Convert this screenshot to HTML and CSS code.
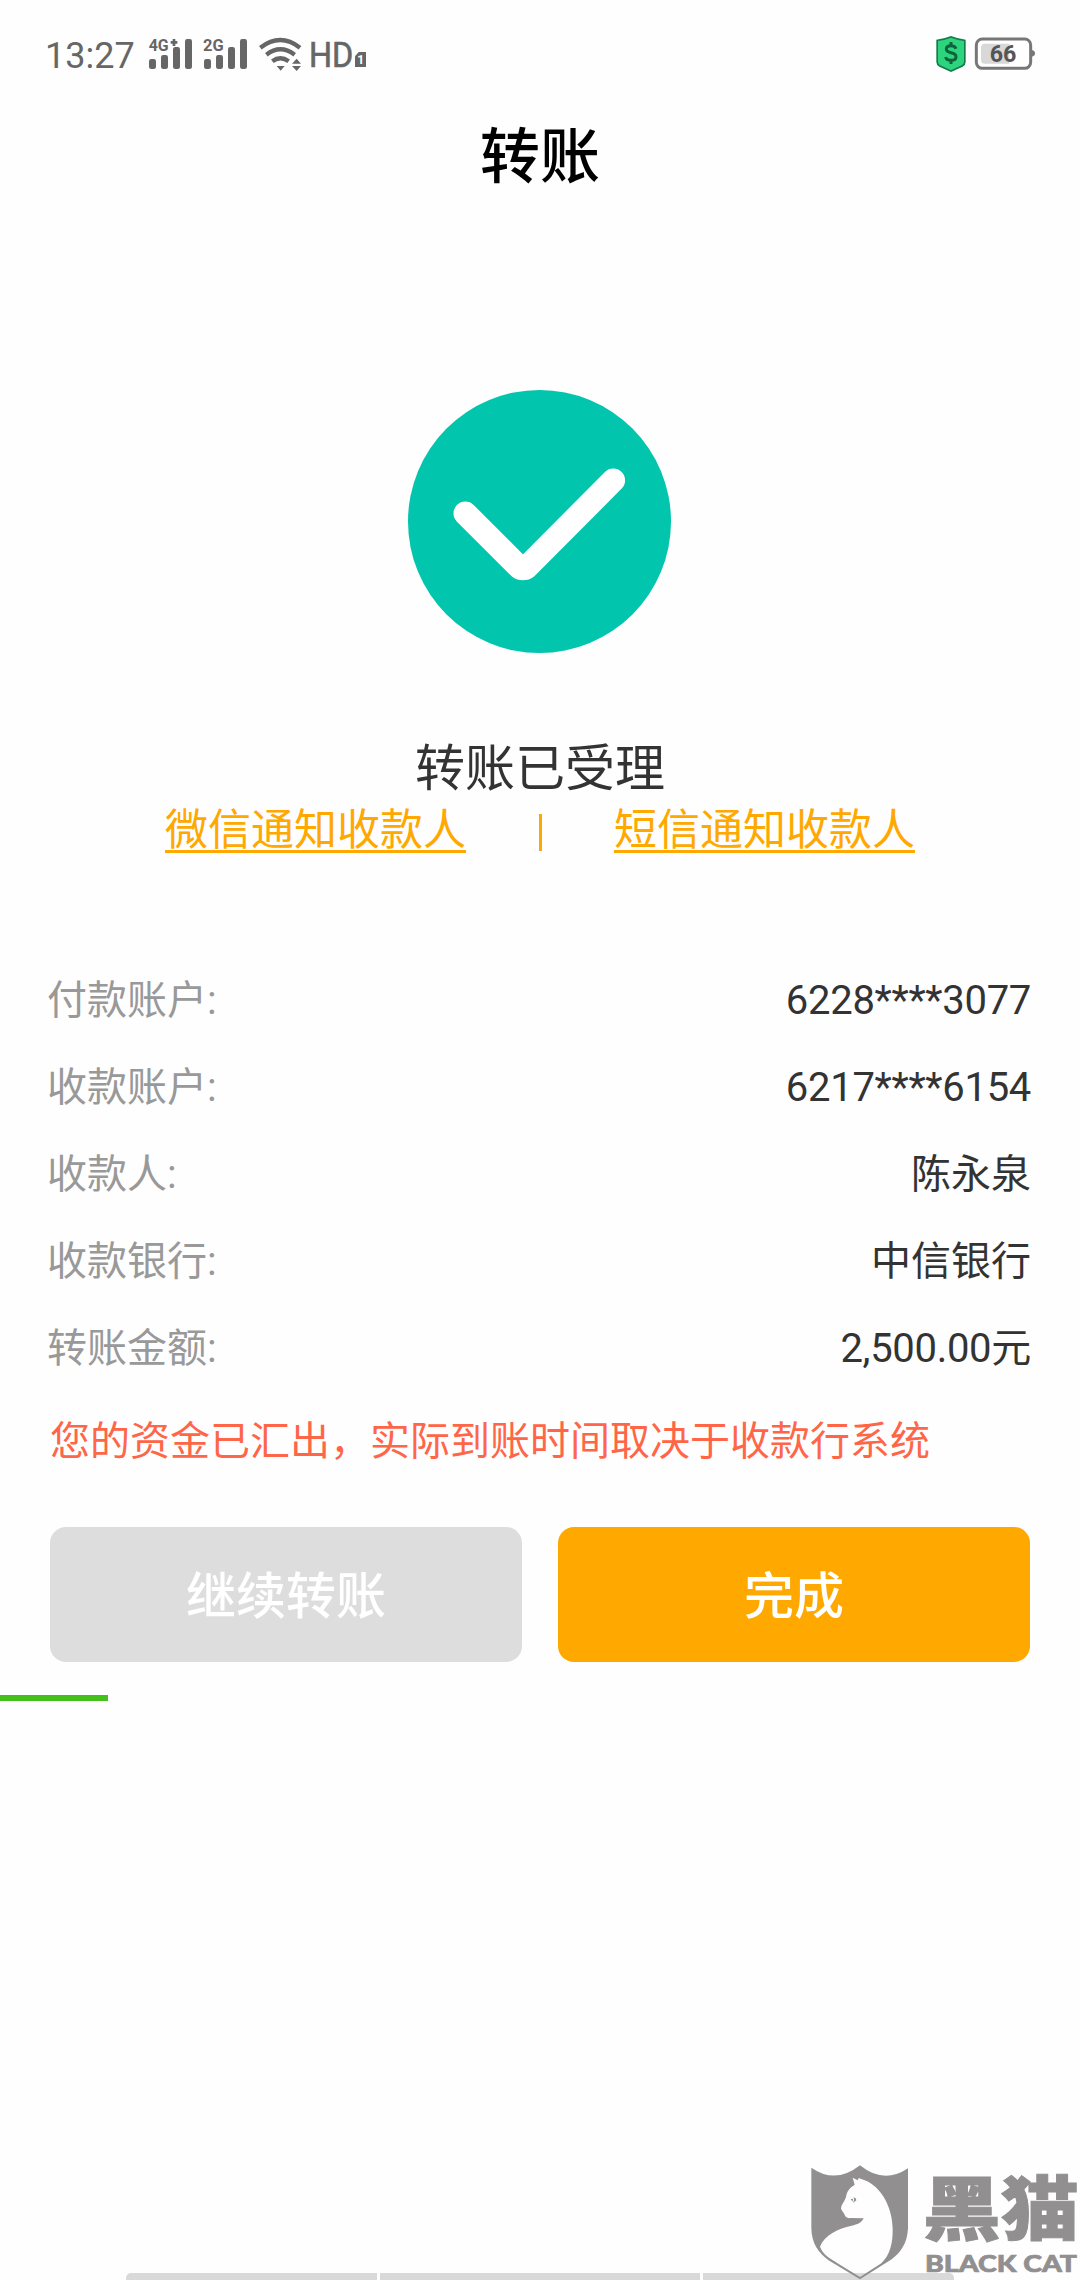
FILE: index.html
```html
<!DOCTYPE html>
<html lang="zh-CN">
<head>
<meta charset="utf-8">
<title>转账</title>
<link rel="stylesheet" href="styles.css">
</head>
<body>
<div class="screen">
  <header class="status">
    <div class="status-left">
      <span class="clock">13:27</span>
      <svg class="signals" width="240" height="40" viewBox="345 45 720 120">
        <g fill="#666">
          <rect x="357" y="117" width="21" height="30" rx="7"/>
          <rect x="393" y="105" width="21" height="42" rx="7"/>
          <rect x="429" y="81" width="21" height="66" rx="7"/>
          <rect x="465" y="57" width="21" height="90" rx="7"/>
          <path d="M428 57h8v6h6v8h-6v7h-8v-7h-6v-8h6z"/>
          <rect x="522" y="117" width="21" height="30" rx="7"/>
          <rect x="558" y="105" width="21" height="42" rx="7"/>
          <rect x="594" y="81" width="21" height="66" rx="7"/>
          <rect x="630" y="57" width="21" height="90" rx="7"/>
          <path d="M740 138h24l-12 14zM786 131l14-15 13 15zM786 138h27l-13 15z"/>
          <path d="M975 141v-32l11-13h22v45z"/>
        </g>
        <g fill="none" stroke="#666" stroke-width="13">
          <path d="M691 83Q751 37 810 83"/>
          <path d="M709 104Q751 72 794 104"/>
          <path d="M727 124Q751 106 776 124"/>
        </g>
        <g class="tiny" fill="#666">
          <text x="356" y="93" font-size="51" textLength="60" lengthAdjust="spacingAndGlyphs">4G</text>
          <text x="519" y="93" font-size="51" textLength="62" lengthAdjust="spacingAndGlyphs">2G</text>
          <text x="982" y="132" font-size="36" fill="#fff">1</text>
        </g>
        <text class="hd" x="837" y="141" font-size="105" fill="#666" stroke="#666" stroke-width="2" textLength="133" lengthAdjust="spacingAndGlyphs">HD</text>
      </svg>
    </div>
    <svg class="power" width="102" height="40" viewBox="105 40 306 120">
      <path d="M153 49Q176 58 197 60V127Q197 136 188 141L153 157L118 141Q109 136 109 127V60Q131 58 153 49Z" fill="#157a4b"/>
      <path d="M153 54Q174 62 192 64V126Q192 133 185 137L153 152L121 137Q114 133 114 126V64Q133 62 153 54Z" fill="#2bd47d"/>
      <path d="M168 87Q165 78 153 78Q139 78 139 88Q139 96 153 99Q168 102 168 111Q168 122 153 122Q139 122 137 112M153 67V78M153 122V133" fill="none" stroke="#10613c" stroke-width="9"/>
      <rect x="229" y="58" width="163" height="88" rx="18" fill="#fff" stroke="#777" stroke-width="9"/>
      <path d="M396 91q9 2 9 10t-9 10z" fill="#777"/>
      <path d="M255 72H328V132H255Q243 132 243 120V84Q243 72 255 72Z" fill="#d8d8d8"/>
      <text class="tiny" x="269" y="128" font-size="70" fill="#555" textLength="80" lengthAdjust="spacingAndGlyphs">66</text>
    </svg>
  </header>

  <h1 class="title">转账</h1>

  <svg class="result-icon" width="264" height="264" viewBox="0 0 264 264">
    <circle cx="131.5" cy="131.5" r="131.5" fill="#02c5ad"/>
    <path d="M57.3 123.3L111 177Q115 180 119 177L205.3 90.3" fill="none" stroke="#fff" stroke-width="23.6" stroke-linecap="round" stroke-linejoin="round"/>
  </svg>

  <p class="result">转账已受理</p>
  <nav class="notify">
    <a class="link">微信通知收款人</a>
    <span class="divider"></span>
    <a class="link">短信通知收款人</a>
  </nav>

  <dl class="details">
    <div class="row"><dt>付款账户:</dt><dd class="number">6228****3077</dd></div>
    <div class="row"><dt>收款账户:</dt><dd class="number">6217****6154</dd></div>
    <div class="row"><dt>收款人:</dt><dd>陈永泉</dd></div>
    <div class="row"><dt>收款银行:</dt><dd>中信银行</dd></div>
    <div class="row"><dt>转账金额:</dt><dd class="number">2,500.00元</dd></div>
  </dl>
  <p class="notice">您的资金已汇出，实际到账时间取决于收款行系统</p>

  <div class="actions">
    <button class="btn btn-muted">继续转账</button>
    <button class="btn btn-primary">完成</button>
  </div>
  <div class="progress"></div>

  <div class="navbar"><i></i><i></i><i></i></div>

  <svg class="watermark" width="300" height="140" viewBox="0 0 900 420">
    <path fill="#918f90" fill-rule="evenodd" d="M94 83Q167 134 240 76Q311 134 384 85V265C382 310 362 338 335 358L240 418L148 362C115 340 95 310 94 265Z
      M218 113L224 134C214 141 203 148 199 166C197 182 185 190 183 206C186 214 193 219 196 229Q200 236 212 234L251 235C245 248 232 254 215 257C175 265 133 285 120 320C130 345 150 355 175 371L240 411L304 370C330 345 339 310 338 265C336 205 310 150 262 124L236 114L233 121Z"/>
    <path fill="#918f90" d="M212 178l7-2-1 9zM221 172q8 2 8 9l-10 8q6-9 2-17z"/>
    <text class="brand-cn" fill="#918f90" stroke="#918f90" stroke-width="3" transform="translate(428 286) scale(1.02 .92)" font-size="228" textLength="460" lengthAdjust="spacingAndGlyphs">黑猫</text>
    <text class="brand-en" x="435" y="396" font-size="66" fill="#918f90" stroke="#918f90" stroke-width="2" textLength="456" lengthAdjust="spacingAndGlyphs">BLACK CAT</text>
  </svg>
</div>
</body>
</html>
```
FILE: styles.css
```css
* { box-sizing: border-box; margin: 0; padding: 0; }

body {
  background: #fefefe;
  color: #333;
  font-family: Roboto, "Noto Sans CJK SC", sans-serif;
}

.screen {
  position: relative;
  display: flex;
  flex-direction: column;
  width: 1080px;
  height: 2280px;
  overflow: hidden;
}

.status {
  display: flex;
  justify-content: space-between;
  height: 112px;
  padding: 33px 43px 0 45px;
}
.status-left { display: flex; }
.clock { width: 100px; font-size: 36px; line-height: 46px; color: #666; }
.signals { margin-top: 2px; }
.tiny { font-family: Roboto, sans-serif; font-weight: 700; }
.hd { font-family: Roboto, sans-serif; }

.title {
  height: 90px;
  color: #000;
  font-size: 60px;
  font-weight: 500;
  line-height: 91px;
  text-align: center;
}

.result-icon { flex: none; margin: 188px 0 0 408px; }

.result {
  height: 70px;
  margin-top: 80px;
  font-size: 50px;
  line-height: 71px;
  text-align: center;
}

.notify {
  display: flex;
  justify-content: space-between;
  align-items: flex-start;
  height: 59px;
  margin: 0 165px;
  padding-top: 4px;
}
.link {
  height: 45px;
  padding-top: 2px;
  border-bottom: 3px solid #ffa800;
  color: #ffa800;
  font-size: 43px;
  line-height: 40px;
}
.divider { width: 3px; height: 37px; margin-top: 6px; background: #ffa800; }

.details { margin-top: 94px; padding: 0 49px 0 47px; font-size: 40px; }
.row { display: flex; justify-content: space-between; height: 87px; line-height: 87px; }
.row dt { color: #999; }
.number { letter-spacing: -0.3px; }

.notice {
  height: 87px;
  margin-top: 6px;
  padding-left: 50px;
  color: #ff6648;
  font-size: 40px;
  line-height: 87px;
}

.actions { display: flex; gap: 36px; margin-top: 42px; padding: 0 50px; }
.btn {
  flex: 1;
  height: 135px;
  padding-top: 5px;
  border: 0;
  border-radius: 16px;
  color: #fff;
  font: 500 50px/130px Roboto, "Noto Sans CJK SC", sans-serif;
}
.btn-muted { background: #ddd; }
.btn-primary { background: #ffa800; }

.progress { width: 108px; height: 6px; margin-top: 33px; background: #44c01a; }

.navbar {
  display: grid;
  grid-template-columns: 251px 320px 251px;
  gap: 3px;
  width: 828px;
  height: 7px;
  margin: auto auto 0;
  border-radius: 5px 5px 0 0;
  overflow: hidden;
}
.navbar i { background: #d9d9d9; }

.watermark { position: absolute; right: 0; bottom: 0; }
.brand-cn { font-family: "Noto Sans CJK SC", sans-serif; font-weight: 900; }
.brand-en { font-family: Lato, sans-serif; font-weight: 900; }
```
